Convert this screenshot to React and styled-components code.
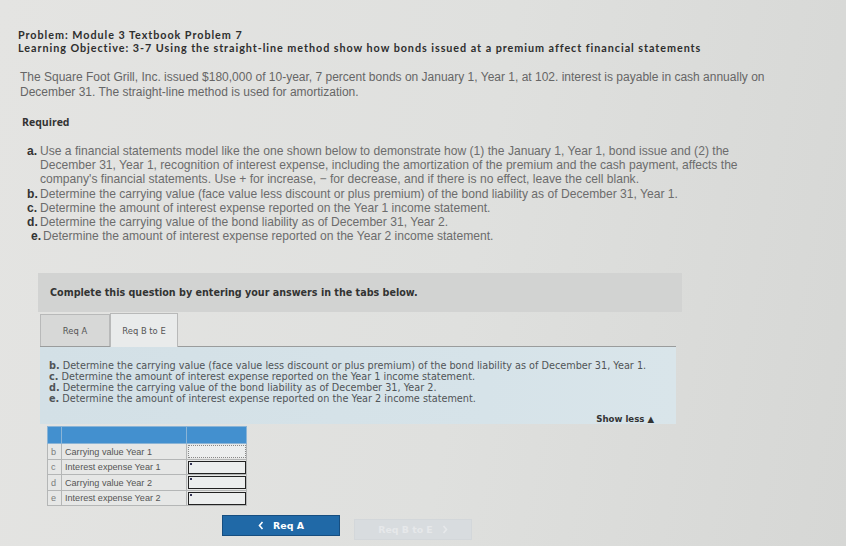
import React from "react";
import styled, { createGlobalStyle } from "styled-components";

const Global = createGlobalStyle`
  html, body { margin: 0; padding: 0; }
  body {
    width: 846px; height: 546px; overflow: hidden;
    background: linear-gradient(100deg, #e4e4e2 0%, #dfe0de 55%, #d6d7d5 100%);
    font-family: "Liberation Sans", Arial, sans-serif;
  }
`;

const Page = styled.div`
  padding: 28px 0 0 18px;
  box-sizing: border-box;
  height: 546px;
`;

const Header = styled.div`
  font-family: Lato, "Open Sans", sans-serif;
  font-size: 10.8px;
  font-weight: 700;
  letter-spacing: 0.95px;
  line-height: 13px;
  color: #2e2e2e;
  white-space: nowrap;
`;

const Para = styled.p`
  margin: 16px 0 0 2px;
  font-size: 12px;
  line-height: 15px;
  color: #666;
  width: 748px;
`;

const Required = styled.div`
  margin: 15px 0 0 4px;
  font-family: "Open Sans", sans-serif;
  font-size: 10.5px;
  font-weight: 700;
  color: #333;
`;

const List = styled.div`
  margin: 15px 0 0 9px;
  font-size: 12.1px;
  line-height: 14.2px;
  color: #6c6c6c;
`;

const Item = styled.div`
  display: flex;
  width: 737px;
`;

const Letter = styled.span`
  font-weight: 700;
  color: #333;
  width: ${p => (p.$indent ? "16px" : "13px")};
  flex: none;
  text-align: left;
  padding-left: ${p => (p.$indent ? "4px" : "0")};
  box-sizing: border-box;
`;

const ItemText = styled.span`
  flex: 1;
`;

const Prompt = styled.div`
  margin: 30px 0 0 20px;
  width: 644px;
  height: 39px;
  background: #d2d3d2;
  display: flex;
  align-items: center;
  padding-left: 12px;
  box-sizing: border-box;
  font-family: "DejaVu Sans", Verdana, sans-serif;
  font-size: 9.6px;
  font-weight: 700;
  color: #333;
`;

const Tabs = styled.div`
  margin: 1px 0 0 22px;
  width: 636px;
  display: flex;
  align-items: flex-end;
  border-bottom: 1px solid #9a9c9c;
`;

const Tab = styled.div`
  width: ${p => p.$w}px;
  box-sizing: border-box;
  display: flex;
  align-items: center;
  justify-content: center;
  font-family: "DejaVu Sans", Verdana, sans-serif;
  font-size: 8.4px;
  color: #555;
  background: ${p => (p.$active ? "#e9ebeb" : "#d7d8d7")};
  border: 1px solid #b8b9b9;
  border-bottom: none;
  margin-bottom: ${p => (p.$active ? "-1px" : "0")};
  height: ${p => (p.$active ? "34px" : "32px")};
`;

const Panel = styled.div`
  margin-left: 22px;
  width: 636px;
  height: 77px;
  box-sizing: border-box;
  background: linear-gradient(90deg, #d3e0e6 0%, #d6e3e9 70%, #d9e5ea 100%);
  padding: 13px 0 0 9px;
  font-family: "DejaVu Sans", Verdana, sans-serif;
  font-size: 9.7px;
  line-height: 11px;
  color: #505457;
  position: relative;
`;

const PanelLine = styled.div`
  white-space: nowrap;
`;

const ShowLess = styled.div`
  position: absolute;
  right: 22px;
  bottom: -1px;
  font-weight: 700;
  font-size: 8.6px;
  color: #333;
`;

const Table = styled.table`
  margin: 2px 0 0 29px;
  border-collapse: collapse;
  font-size: 9.1px;
  color: #555;
  background: #e6e7e6;
`;

const HeadCell = styled.td`
  height: 16px;
  background: #4390cf;
  border: 1px solid #8ab4d6;
  padding: 0;
`;

const Cell = styled.td`
  height: 14.5px;
  border: 1px solid #b4b6b6;
  padding: 0 0 0 3px;
  width: ${p => p.$w}px;
  white-space: nowrap;
  color: ${p => (p.$light ? "#7a7c7c" : "#555")};
`;

const ValCell = styled.td`
  width: 59px;
  padding: 0;
  border: 1px solid #b4b6b6;
`;

const Input = styled.div`
  height: 13px;
  margin: 0 0 0 1px;
  box-sizing: border-box;
  border: ${p => (p.$focus ? "1px dotted #888" : "1px solid #222")};
  background: #eceeee;
  position: relative;
  &::before {
    content: "";
    display: ${p => (p.$focus ? "none" : "block")};
    position: absolute;
    left: 1px; top: 1px;
    width: 2px; height: 2px;
    background: #335;
  }
`;

const Nav = styled.div`
  margin: 9px 0 0 204px;
  display: flex;
  gap: 14px;
  align-items: flex-start;
`;

const NavButton = styled.div`
  width: 118px;
  height: 21px;
  box-sizing: border-box;
  display: flex;
  align-items: center;
  justify-content: center;
  gap: 9px;
  margin-top: ${p => (p.$off ? "4px" : "0")};
  background: ${p => (p.$off ? "#d8dcdf" : "#2069a7")};
  border: 1px solid ${p => (p.$off ? "#d3d7da" : "#164e80")};
  color: ${p => (p.$off ? "#e6e8ea" : "#fff")};
  font-family: "DejaVu Sans", Verdana, sans-serif;
  font-weight: 700;
  font-size: 9.4px;
`;

const Chev = ({ dir }) => (
  <svg width="6" height="9" viewBox="0 0 6 9">
    <path
      d={dir === "left" ? "M4.5 1 L1.5 4.5 L4.5 8" : "M1.5 1 L4.5 4.5 L1.5 8"}
      fill="none"
      stroke="currentColor"
      strokeWidth="1.6"
    />
  </svg>
);

const rows = [
  ["b", "Carrying value Year 1", true],
  ["c", "Interest expense Year 1", false],
  ["d", "Carrying value Year 2", false],
  ["e", "Interest expense Year 2", false],
];

export default function App() {
  return (
    <>
      <Global />
      <Page>
        <Header>
          <div>Problem: Module 3 Textbook Problem 7</div>
          <div>
            Learning Objective: 3-7 Using the straight-line method show how bonds issued at a premium affect financial statements
          </div>
        </Header>
        <Para>
          The Square Foot Grill, Inc. issued $180,000 of 10-year, 7 percent bonds on January 1, Year 1, at 102. interest is payable in cash annually on December 31. The straight-line method is used for amortization.
        </Para>
        <Required>Required</Required>
        <List>
          <Item>
            <Letter>a.</Letter>
            <ItemText>
              Use a financial statements model like the one shown below to demonstrate how (1) the January 1, Year 1, bond issue and (2) the December 31, Year 1, recognition of interest expense, including the amortization of the premium and the cash payment, affects the company's financial statements. Use + for increase, − for decrease, and if there is no effect, leave the cell blank.
            </ItemText>
          </Item>
          <Item>
            <Letter>b.</Letter>
            <ItemText>Determine the carrying value (face value less discount or plus premium) of the bond liability as of December 31, Year 1.</ItemText>
          </Item>
          <Item>
            <Letter>c.</Letter>
            <ItemText>Determine the amount of interest expense reported on the Year 1 income statement.</ItemText>
          </Item>
          <Item>
            <Letter>d.</Letter>
            <ItemText>Determine the carrying value of the bond liability as of December 31, Year 2.</ItemText>
          </Item>
          <Item>
            <Letter $indent>e.</Letter>
            <ItemText>Determine the amount of interest expense reported on the Year 2 income statement.</ItemText>
          </Item>
        </List>

        <Prompt>Complete this question by entering your answers in the tabs below.</Prompt>

        <Tabs>
          <Tab $w={70}>Req A</Tab>
          <Tab $w={68} $active>Req B to E</Tab>
        </Tabs>
        <Panel>
          <PanelLine><b>b.</b> Determine the carrying value (face value less discount or plus premium) of the bond liability as of December 31, Year 1.</PanelLine>
          <PanelLine><b>c.</b> Determine the amount of interest expense reported on the Year 1 income statement.</PanelLine>
          <PanelLine><b>d.</b> Determine the carrying value of the bond liability as of December 31, Year 2.</PanelLine>
          <PanelLine><b>e.</b> Determine the amount of interest expense reported on the Year 2 income statement.</PanelLine>
          <ShowLess>Show less ▲</ShowLess>
        </Panel>

        <Table>
          <tbody>
            <tr>
              <HeadCell />
              <HeadCell />
              <HeadCell />
            </tr>
            {rows.map(([l, t, f]) => (
              <tr key={l}>
                <Cell $w={10} $light>{l}</Cell>
                <Cell $w={121}>{t}</Cell>
                <ValCell>
                  <Input $focus={f} />
                </ValCell>
              </tr>
            ))}
          </tbody>
        </Table>

        <Nav>
          <NavButton>
            <Chev dir="left" />
            Req A
          </NavButton>
          <NavButton $off>
            Req B to E
            <Chev dir="right" />
          </NavButton>
        </Nav>
      </Page>
    </>
  );
}
